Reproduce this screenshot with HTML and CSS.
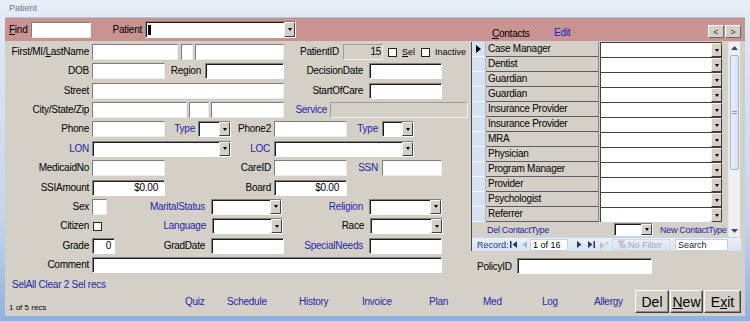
FILE: index.html
```html
<!DOCTYPE html>
<html>
<head>
<meta charset="utf-8">
<title>Patient</title>
<link rel="stylesheet" href="styles.css">
</head>
<body>
<div class="window">
  <div class="titlebar">Patient</div>
  <div class="client">
    <div class="band">
      <span class="l w22 left-al"><u>F</u>ind</span>
      <span class="tb w60"></span>
      <span class="l w54 pr3">Patient</span>
      <span class="sk cb w151 h17"><span class="caret"></span><span class="dd"></span></span>
      <span class="contacts"><u>C</u>ontacts</span>
      <span class="edit">Edit</span>
      <span class="navbtns"><span class="nb">&lt;</span><span class="nb">&gt;</span></span>
    </div>

    <div class="main">
      <div class="left">
        <div class="rows">
          <div class="row">
            <span class="l w87 pr3">First/MI/<u>L</u>astName</span>
            <span class="tb w86"></span>
            <span class="tb w12 ml3"></span>
            <span class="tb w89 ml2"></span>
            <span class="l w59 pr4">PatientID</span>
            <span class="ro w40">15</span>
            <span class="chk ml5"></span>
            <span class="small w19 ml5"><u>S</u>el</span>
            <span class="chk"></span>
            <span class="small ml5">Inactive</span>
          </div>
          <div class="row">
            <span class="l w87 pr3">DOB</span>
            <span class="tb w73"></span>
            <span class="l w40 pr4">Region</span>
            <span class="sk w79"></span>
            <span class="l w85 pr6">DecisionDate</span>
            <span class="sk w73"></span>
          </div>
          <div class="row">
            <span class="l w87 pr3">Street</span>
            <span class="tb w192"></span>
            <span class="l w85 pr6">StartOfCare</span>
            <span class="sk w73"></span>
          </div>
          <div class="row">
            <span class="l w87 pr3">City/State/Zip</span>
            <span class="tb w95"></span>
            <span class="tb w20 ml2"></span>
            <span class="tb w73 ml2"></span>
            <span class="l blue w46 pr3">Service</span>
            <span class="ro w138"></span>
          </div>
          <div class="row">
            <span class="l w87 pr3">Phone</span>
            <span class="tb w73"></span>
            <span class="l blue w33 pr3">Type</span>
            <span class="sk cb w33"><span class="dd"></span></span>
            <span class="l w43 pr3">Phone2</span>
            <span class="tb w73"></span>
            <span class="l blue w35 pr4">Type</span>
            <span class="sk cb w32"><span class="dd"></span></span>
          </div>
          <div class="row">
            <span class="l blue w87 pr3">LON</span>
            <span class="sk cb w139"><span class="dd"></span></span>
            <span class="l blue w43 pr4">LOC</span>
            <span class="sk cb w140"><span class="dd"></span></span>
          </div>
          <div class="row">
            <span class="l w87 pr3">MedicaidNo</span>
            <span class="tb w73"></span>
            <span class="l w109 pr3">CareID</span>
            <span class="tb w73"></span>
            <span class="l blue w35 pr4">SSN</span>
            <span class="tb w60"></span>
          </div>
          <div class="row">
            <span class="l w87 pr3">SSIAmount</span>
            <span class="sk w73 val pr6">$0.00</span>
            <span class="l w109 pr3">Board</span>
            <span class="sk w73 val pr7">$0.00</span>
          </div>
          <div class="row">
            <span class="l w87 pr3">Sex</span>
            <span class="tb w15"></span>
            <span class="l blue w104 pr6">MaritalStatus</span>
            <span class="sk cb w71"><span class="dd"></span></span>
            <span class="l blue w87 pr6">Religion</span>
            <span class="sk cb w73"><span class="dd"></span></span>
          </div>
          <div class="row">
            <span class="l w88 pr4">Citizen</span>
            <span class="chk"></span>
            <span class="l blue w110 pr6">Language</span>
            <span class="sk cb w71"><span class="dd"></span></span>
            <span class="l w87 pr6">Race</span>
            <span class="sk cb w73"><span class="dd"></span></span>
          </div>
          <div class="row">
            <span class="l w87 pr3">Grade</span>
            <span class="sk w23 val pr3">0</span>
            <span class="l w96 pr6">GradDate</span>
            <span class="sk w73"></span>
            <span class="l blue w85 pr6">SpecialNeeds</span>
            <span class="sk w73"></span>
          </div>
          <div class="row">
            <span class="l w87 pr3">Comment</span>
            <span class="sk w350"></span>
          </div>
        </div>
        <div class="selall">SelAll Clear 2 Sel recs</div>
      </div>

      <div class="right">
        <div class="sub">
          <div class="subbody">
            <div class="sublist">
              <div class="srow"><span class="sel"><svg class="cur" width="5" height="8" viewBox="0 0 5 8"><path d="M0 0L5 4L0 8z" fill="#000"/></svg></span><span class="slbl">Case Manager</span><span class="scb"><span class="dd"></span></span></div>
              <div class="srow"><span class="sel"></span><span class="slbl">Dentist</span><span class="scb"><span class="dd"></span></span></div>
              <div class="srow"><span class="sel"></span><span class="slbl">Guardian</span><span class="scb"><span class="dd"></span></span></div>
              <div class="srow"><span class="sel"></span><span class="slbl">Guardian</span><span class="scb"><span class="dd"></span></span></div>
              <div class="srow"><span class="sel"></span><span class="slbl">Insurance Provider</span><span class="scb"><span class="dd"></span></span></div>
              <div class="srow"><span class="sel"></span><span class="slbl">Insurance Provider</span><span class="scb"><span class="dd"></span></span></div>
              <div class="srow"><span class="sel"></span><span class="slbl">MRA</span><span class="scb"><span class="dd"></span></span></div>
              <div class="srow"><span class="sel"></span><span class="slbl">Physician</span><span class="scb"><span class="dd"></span></span></div>
              <div class="srow"><span class="sel"></span><span class="slbl">Program Manager</span><span class="scb"><span class="dd"></span></span></div>
              <div class="srow"><span class="sel"></span><span class="slbl">Provider</span><span class="scb"><span class="dd"></span></span></div>
              <div class="srow"><span class="sel"></span><span class="slbl">Psychologist</span><span class="scb"><span class="dd"></span></span></div>
              <div class="srow"><span class="sel"></span><span class="slbl">Referrer</span><span class="scb"><span class="dd"></span></span></div>
              <div class="delrow">
                <span class="del">Del ContactType</span>
                <span class="sk cb w39 h13"><span class="dd"></span></span>
                <span class="newct">New ContactType</span>
              </div>
            </div>
            <div class="vscroll">
              <svg class="sarrow" width="7" height="4" viewBox="0 0 7 4"><path d="M0 4L3.5 0L7 4z" fill="#3c4a66"/></svg>
              <div class="thumb"><span class="grip"></span></div>
              <div class="track"></div>
              <svg class="sarrow" width="7" height="4" viewBox="0 0 7 4"><path d="M0 0L3.5 4L7 0z" fill="#3c4a66"/></svg>
            </div>
          </div>
          <div class="navrow">
            <span class="rec">Record:</span>
            <svg class="ni" width="8" height="7" viewBox="0 0 8 7"><rect x="0" y="0" width="1.5" height="7" fill="#1f3b73"/><path d="M7 0L2.5 3.5L7 7z" fill="#1f3b73"/></svg>
            <svg class="ni ml4" width="5" height="7" viewBox="0 0 5 7"><path d="M5 0L0.5 3.5L5 7z" fill="#aab5c6"/></svg>
            <span class="pos">1 of 16</span>
            <svg class="ni ml9" width="5" height="7" viewBox="0 0 5 7"><path d="M0 0L4.5 3.5L0 7z" fill="#1f3b73"/></svg>
            <svg class="ni ml6" width="8" height="7" viewBox="0 0 8 7"><path d="M0 0L4.5 3.5L0 7z" fill="#1f3b73"/><rect x="5.5" y="0" width="1.5" height="7" fill="#1f3b73"/></svg>
            <svg class="ni ml4" width="9" height="8" viewBox="0 0 9 8"><path d="M0 1L4.5 4.5L0 8z" fill="#b7c0ce"/><path d="M7 0L7.6 1.6L9 1.8L7.9 2.8L8.2 4.3L7 3.5L5.8 4.3L6.1 2.8L5 1.8L6.4 1.6z" fill="#d2c9a8"/></svg>
            <span class="nofilter"><svg width="9" height="9" viewBox="0 0 9 9"><path d="M0 0.5H8L5 4.5V8.5L3 7.5V4.5z" fill="#b9c1cd"/><path d="M5.5 4.5L9 8M9 4.5L5.5 8" stroke="#d8b0b0" stroke-width="1.2"/></svg>No Filter</span>
            <span class="search">Search</span>
          </div>
        </div>
        <div class="policy">
          <span class="pl">PolicyID</span>
          <span class="sk w135"></span>
        </div>
      </div>
    </div>

    <div class="bottom">
      <span class="recs">1 of 5 recs</span>
      <span class="lnk w42">Quiz</span>
      <span class="lnk w72">Schedule</span>
      <span class="lnk w63">History</span>
      <span class="lnk w67">Invoice</span>
      <span class="lnk w54">Plan</span>
      <span class="lnk w59">Med</span>
      <span class="lnk w52">Log</span>
      <span class="lnk w41">Allergy</span>
      <span class="btn w34">Del</span>
      <span class="btn w33 ml1"><span><u>N</u>ew</span></span>
      <span class="btn w37 ml1"><span>E<u>x</u>it</span></span>
    </div>
  </div>
</div>
</body>
</html>
```

FILE: styles.css
```css
* { box-sizing: border-box; }
html, body { margin: 0; padding: 0; }
body {
  width: 750px; height: 321px; overflow: hidden;
  font-family: "Liberation Sans", Arial, sans-serif;
  font-size: 10px; letter-spacing: -0.25px; color: #000;
}
u { text-decoration: underline; text-underline-offset: 1px; }

.window {
  width: 750px; height: 321px;
  display: flex; flex-direction: column;
  padding: 0 5px 5px 5px;
  background: linear-gradient(#e8eff8 0, #dde7f4 30px, #c3d5ee 220px, #8fb0de 100%);
}
.titlebar {
  height: 18px; flex: none;
  line-height: 17px; padding-left: 4px;
  font-size: 9px; letter-spacing: 0; color: #6d7a89;
  border-bottom: 1px solid #b7c3d2;
}
.client {
  flex: 1; min-height: 0;
  display: flex; flex-direction: column;
  background: #d4d0c8;
}

/* header band */
.band {
  height: 23px; flex: none;
  display: flex; align-items: center;
  padding: 0 4px;
  background: #c89391;
}
.left-al { text-align: left !important; }
.caret { width: 3px; height: 10px; background: #000; align-self: center; margin-left: 2px; }
.contacts { align-self: flex-end; line-height: 12px; margin-bottom: 1px; margin-left: 196px; width: 32px; white-space: nowrap; }
.edit { align-self: flex-end; line-height: 12px; margin-bottom: 2px; margin-left: 30px; color: #2222c4; }
.navbtns { margin-left: auto; align-self: flex-end; margin-bottom: 3px; display: flex; gap: 1px; }
.nb {
  width: 16px; height: 13px;
  display: flex; align-items: center; justify-content: center;
  font-size: 9px; letter-spacing: 0; color: #333;
  background: #d4d0c8;
  border: 1px solid; border-color: #fff #6a6a6a #6a6a6a #fff;
}

/* main area */
.main { height: 249px; flex: none; display: flex; }
.left { width: 466px; flex: none; padding-top: 3px; }
.rows { display: flex; flex-direction: column; gap: 3.36px; }
.row { height: 16px; display: flex; align-items: center; }

.l { flex: none; text-align: right; white-space: nowrap; line-height: 16px; }
.blue { color: #2626a6; }
.small { font-size: 9px; letter-spacing: 0; white-space: nowrap; flex: none; }

.tb, .sk, .ro { height: 16px; flex: none; line-height: 14px; }
.tb { background: #fff; border: 1px solid; border-color: #7c7c7c #ececec #ececec #7c7c7c; }
.sk { background: #fff; border: 1px solid; border-color: #808080 #fff #fff #808080; box-shadow: inset 1px 1px 0 #1c1c1c; }
.ro { background: #d4d0c8; border: 1px solid; border-color: #9c9c9c #f0f0f0 #f0f0f0 #9c9c9c; text-align: right; padding-right: 1px; }
.val { text-align: right; }
.h17 { height: 17px; }
.h13 { height: 13px; }

.cb { display: flex; align-items: stretch; }
.dd {
  width: 11px; margin-left: auto; flex: none;
  background: #d4d0c8;
  border: 1px solid; border-color: #f6f6f6 #404040 #404040 #f6f6f6;
  display: flex; align-items: center; justify-content: center;
}
.dd::after {
  content: ""; width: 0; height: 0;
  border-left: 2px solid transparent; border-right: 2px solid transparent;
  border-top: 3px solid #000;
}
.chk { width: 9px; height: 9px; flex: none; background: #fff; border: 1px solid #222; }

.selall { margin-top: 6px; padding-left: 7px; line-height: 12px; color: #2626a6; }

/* contacts subform */
.right { width: 270px; flex: none; padding-top: 1px; }
.sub { height: 209px; border-left: 1px solid #4a4a4a; display: flex; flex-direction: column; }
.subbody { height: 195px; display: flex; }
.sublist { width: 256px; flex: none; display: flex; flex-direction: column; }
.srow { height: 15px; flex: none; display: flex; }
.sel {
  width: 14px; flex: none;
  background: #d6e2f2;
  border-bottom: 1px solid #f4f8fc; border-right: 1px solid #a9bbd4;
  display: flex; align-items: center; justify-content: center;
}
.slbl {
  width: 113px; flex: none;
  padding-left: 2px; line-height: 14px; white-space: nowrap; overflow: hidden;
  background: #d4d0c8;
  border-bottom: 1px solid #5e5e5e; border-right: 1px solid #8a8a8a;
}
.scb {
  width: 122px; flex: none; margin-left: 1px;
  background: #fff;
  border-top: 1px solid #404040; border-left: 1px solid #404040;
  display: flex;
}
.delrow { height: 15px; flex: none; display: flex; align-items: center; font-size: 9px; letter-spacing: -0.3px; }
.del { width: 142px; flex: none; padding-left: 15px; color: #2626a6; white-space: nowrap; }
.newct { margin-left: 7px; color: #2626a6; white-space: nowrap; }

.vscroll {
  width: 12px; flex: none;
  background: #eef0f3;
  border-left: 1px solid #e2e5ea;
  display: flex; flex-direction: column; align-items: center;
  position: relative; z-index: 1;
}
.sarrow { flex: none; margin: 4px 0; }
.thumb {
  width: 9px; height: 115px; flex: none; margin-top: 1px;
  border: 1px solid #a3b4ce; border-radius: 2px;
  background: linear-gradient(90deg, #e9eff7, #d9e3f0);
  display: flex; align-items: center; justify-content: center;
}
.grip { width: 5px; height: 3px; border-top: 1px solid #8a9cb8; border-bottom: 1px solid #8a9cb8; }
.track { flex: 1; }

.navrow {
  height: 14px; flex: none;
  display: flex; align-items: center;
  background: linear-gradient(#eaf0f8, #d7e2f1);
  border-top: 1px solid #c6d4e7;
  font-size: 9px; letter-spacing: 0; color: #22407a;
}
.rec { width: 38px; flex: none; padding-left: 5px; white-space: nowrap; }
.ni { flex: none; }
.ml4 { margin-left: 4px; }
.ml6 { margin-left: 6px; }
.ml9 { margin-left: 9px; }
.pos {
  width: 38px; height: 12px; flex: none; margin-left: 3px;
  background: #fff; border: 1px solid #c2d0e3;
  padding-left: 2px; line-height: 10px; color: #000; white-space: nowrap;
}
.nofilter {
  width: 58px; height: 12px; flex: none; margin-left: 3px;
  display: flex; align-items: center; gap: 2px; padding-left: 4px;
  border: 1px solid #cfd8e5;
  color: #a3acba; white-space: nowrap;
}
.search {
  width: 53px; height: 12px; flex: none; margin-left: 5px;
  background: #fff; border: 1px solid #c2d0e3;
  padding-left: 2px; line-height: 10px; color: #222;
}

.policy { height: 16px; margin-top: 7px; display: flex; align-items: center; }
.pl { width: 46px; flex: none; padding-left: 6px; white-space: nowrap; }

/* bottom bar */
.bottom { height: 23px; flex: none; display: flex; align-items: center; padding-right: 4px; }
.recs { width: 180px; flex: none; align-self: flex-end; padding-left: 4px; font-size: 8px; letter-spacing: 0; line-height: 10px; }
.lnk { flex: none; color: #2626a6; white-space: nowrap; }
.btn {
  height: 23px; flex: none;
  display: flex; align-items: center; justify-content: center;
  font-size: 14px; letter-spacing: 0;
  background: #d4d0c8;
  border: 1px solid; border-color: #fff #404040 #404040 #fff;
  box-shadow: inset -1px -1px 0 #8a8a8a;
}

/* spacing */
.ml1 { margin-left: 1px; }
.ml2 { margin-left: 2px; }
.ml3 { margin-left: 3px; }
.ml5 { margin-left: 5px; }
.pr3 { padding-right: 3px; }
.pr4 { padding-right: 4px; }
.pr6 { padding-right: 6px; }
.pr7 { padding-right: 7px; }

/* widths */
.w12 { width: 12px; } .w15 { width: 15px; } .w19 { width: 19px; } .w20 { width: 20px; }
.w22 { width: 22px; } .w23 { width: 23px; } .w32 { width: 32px; } .w33 { width: 33px; }
.w34 { width: 34px; } .w35 { width: 35px; } .w37 { width: 37px; } .w39 { width: 39px; }
.w40 { width: 40px; } .w41 { width: 41px; } .w42 { width: 42px; } .w43 { width: 43px; }
.w46 { width: 46px; } .w52 { width: 52px; } .w54 { width: 54px; } .w59 { width: 59px; }
.w60 { width: 60px; } .w63 { width: 63px; } .w67 { width: 67px; } .w71 { width: 71px; }
.w72 { width: 72px; } .w73 { width: 73px; } .w79 { width: 79px; } .w85 { width: 85px; }
.w86 { width: 86px; } .w87 { width: 87px; } .w88 { width: 88px; } .w89 { width: 89px; }
.w95 { width: 95px; } .w96 { width: 96px; } .w104 { width: 104px; } .w109 { width: 109px; }
.w110 { width: 110px; } .w135 { width: 135px; } .w138 { width: 138px; } .w139 { width: 139px; }
.w140 { width: 140px; } .w151 { width: 151px; } .w192 { width: 192px; } .w350 { width: 350px; }
```
